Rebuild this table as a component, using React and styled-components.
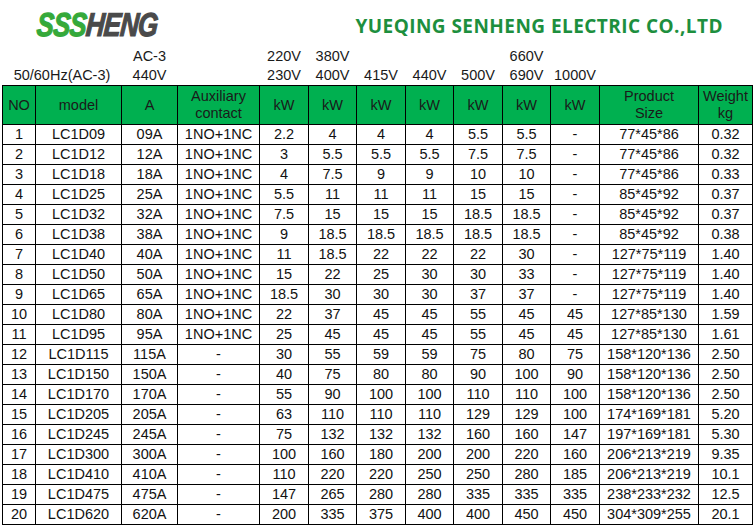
import React from "react";
import styled, { createGlobalStyle } from "styled-components";

const Global = createGlobalStyle`
  html, body { margin: 0; padding: 0; background: #ffffff; }
  body { font-family: "Liberation Sans", Arial, sans-serif; color: #111; }
`;

const Page = styled.div`
  width: 754px;
  height: 528px;
  overflow: hidden;
  background: #fff;
`;

const Header = styled.header`
  height: 47px;
  display: flex;
  align-items: center;
  justify-content: space-between;
  padding: 0 31px 0 37px;
  box-sizing: border-box;
`;

const Logo = styled.div`
  font-family: "Liberation Sans", Arial, sans-serif;
  font-weight: 700;
  font-style: italic;
  font-size: 33px;
  line-height: 1;
  letter-spacing: -1px;
  transform: scaleX(0.78) skewX(-6deg);
  transform-origin: left center;
  -webkit-text-stroke: 1.2px currentColor;
  margin-top: 2px;
`;

const LogoPart = styled.span`
  color: ${(p) => (p.$green ? "#35a93a" : "#4a4a4a")};
  -webkit-text-stroke: 1.2px ${(p) => (p.$green ? "#35a93a" : "#4a4a4a")};
`;

const Company = styled.div`
  font-family: "Open Sans", "DejaVu Sans", sans-serif;
  font-weight: 700;
  font-size: 19px;
  color: #1d8f3e;
  letter-spacing: 0.45px;
  margin-top: 4px;
`;

const Table = styled.table`
  border-collapse: collapse;
  table-layout: fixed;
  width: 750px;
  margin-left: 2px;
  font-family: "Liberation Sans", Arial, sans-serif;
  font-size: 14.5px;
  color: #111;
`;

const LabelCell = styled.th`
  font-weight: 400;
  height: 19px;
  padding: 0;
  line-height: 19px;
  text-align: center;
  white-space: nowrap;
  color: #1a1a1a;
`;

const HeadCell = styled.th`
  background: #00b050;
  border: 1px solid #000;
  font-weight: 400;
  height: 38px;
  padding: 0;
  line-height: 17px;
  text-align: center;
  color: #1a1a1a;
`;

const Cell = styled.td`
  border: 1px solid #000;
  height: 19px;
  padding: 0;
  line-height: 19px;
  text-align: center;
  white-space: nowrap;
  color: #111;
`;

const widths = [33, 86, 56, 82, 49, 48, 49, 48, 49, 48, 49, 99, 54];

const labelRow1 = [
  { t: "", span: 2 },
  { t: "AC-3" },
  { t: "" },
  { t: "220V" },
  { t: "380V" },
  { t: "" },
  { t: "" },
  { t: "" },
  { t: "660V" },
  { t: "" },
  { t: "" },
  { t: "" },
];
const labelRow2 = [
  { t: "50/60Hz(AC-3)", span: 2 },
  { t: "440V" },
  { t: "" },
  { t: "230V" },
  { t: "400V" },
  { t: "415V" },
  { t: "440V" },
  { t: "500V" },
  { t: "690V" },
  { t: "1000V" },
  { t: "" },
  { t: "" },
];

const heads = [
  ["NO"],
  ["model"],
  ["A"],
  ["Auxiliary", "contact"],
  ["kW"],
  ["kW"],
  ["kW"],
  ["kW"],
  ["kW"],
  ["kW"],
  ["kW"],
  ["Product", "Size"],
  ["Weight", "kg"],
];

const A = "1NO+1NC";
const rows = [
  ["1", "LC1D09", "09A", A, "2.2", "4", "4", "4", "5.5", "5.5", "-", "77*45*86", "0.32"],
  ["2", "LC1D12", "12A", A, "3", "5.5", "5.5", "5.5", "7.5", "7.5", "-", "77*45*86", "0.32"],
  ["3", "LC1D18", "18A", A, "4", "7.5", "9", "9", "10", "10", "-", "77*45*86", "0.33"],
  ["4", "LC1D25", "25A", A, "5.5", "11", "11", "11", "15", "15", "-", "85*45*92", "0.37"],
  ["5", "LC1D32", "32A", A, "7.5", "15", "15", "15", "18.5", "18.5", "-", "85*45*92", "0.37"],
  ["6", "LC1D38", "38A", A, "9", "18.5", "18.5", "18.5", "18.5", "18.5", "-", "85*45*92", "0.38"],
  ["7", "LC1D40", "40A", A, "11", "18.5", "22", "22", "22", "30", "-", "127*75*119", "1.40"],
  ["8", "LC1D50", "50A", A, "15", "22", "25", "30", "30", "33", "-", "127*75*119", "1.40"],
  ["9", "LC1D65", "65A", A, "18.5", "30", "30", "30", "37", "37", "-", "127*75*119", "1.40"],
  ["10", "LC1D80", "80A", A, "22", "37", "45", "45", "55", "45", "45", "127*85*130", "1.59"],
  ["11", "LC1D95", "95A", A, "25", "45", "45", "45", "55", "45", "45", "127*85*130", "1.61"],
  ["12", "LC1D115", "115A", "-", "30", "55", "59", "59", "75", "80", "75", "158*120*136", "2.50"],
  ["13", "LC1D150", "150A", "-", "40", "75", "80", "80", "90", "100", "90", "158*120*136", "2.50"],
  ["14", "LC1D170", "170A", "-", "55", "90", "100", "100", "110", "110", "100", "158*120*136", "2.50"],
  ["15", "LC1D205", "205A", "-", "63", "110", "110", "110", "129", "129", "100", "174*169*181", "5.20"],
  ["16", "LC1D245", "245A", "-", "75", "132", "132", "132", "160", "160", "147", "197*169*181", "5.30"],
  ["17", "LC1D300", "300A", "-", "100", "160", "180", "200", "200", "220", "160", "206*213*219", "9.35"],
  ["18", "LC1D410", "410A", "-", "110", "220", "220", "250", "250", "280", "185", "206*213*219", "10.1"],
  ["19", "LC1D475", "475A", "-", "147", "265", "280", "280", "335", "335", "335", "238*233*232", "12.5"],
  ["20", "LC1D620", "620A", "-", "200", "335", "375", "400", "400", "450", "450", "304*309*255", "20.1"],
];

export default function App() {
  return (
    <Page>
      <Global />
      <Header>
        <Logo>
          <LogoPart $green>SSS</LogoPart>
          <LogoPart>HENG</LogoPart>
        </Logo>
        <Company>YUEQING SENHENG ELECTRIC CO.,LTD</Company>
      </Header>
      <Table>
        <colgroup>
          {widths.map((w, i) => (
            <col key={i} style={{ width: w }} />
          ))}
        </colgroup>
        <thead>
          <tr>
            {labelRow1.map((c, i) => (
              <LabelCell key={i} colSpan={c.span || 1}>{c.t}</LabelCell>
            ))}
          </tr>
          <tr>
            {labelRow2.map((c, i) => (
              <LabelCell key={i} colSpan={c.span || 1}>{c.t}</LabelCell>
            ))}
          </tr>
          <tr>
            {heads.map((h, i) => (
              <HeadCell key={i}>
                {h.map((line, j) => (
                  <React.Fragment key={j}>
                    {j > 0 && <br />}
                    {line}
                  </React.Fragment>
                ))}
              </HeadCell>
            ))}
          </tr>
        </thead>
        <tbody>
          {rows.map((r, i) => (
            <tr key={i}>
              {r.map((c, j) => (
                <Cell key={j}>{c}</Cell>
              ))}
            </tr>
          ))}
        </tbody>
      </Table>
    </Page>
  );
}
